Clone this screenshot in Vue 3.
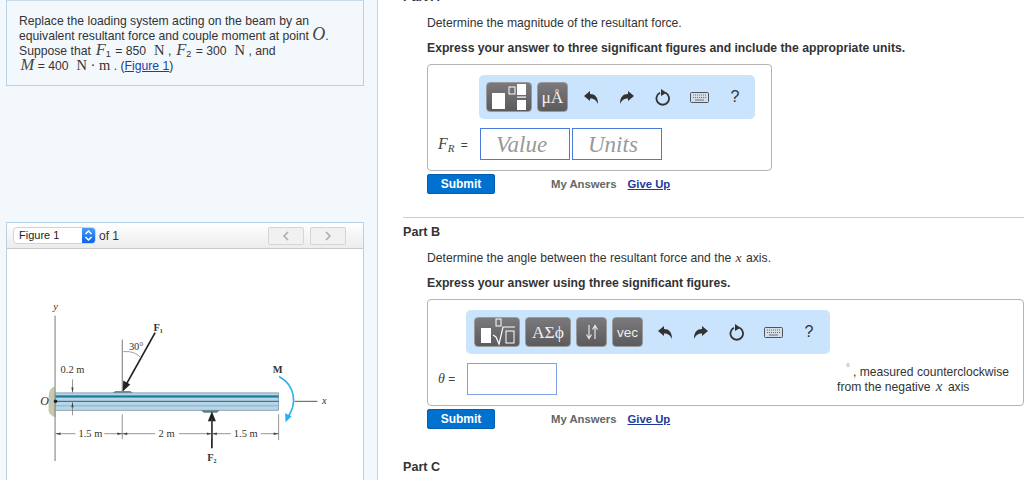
<script setup>
const toolsA = [
  { id: 'tpl', w: 46, kind: 'fraction' },
  { id: 'mu', w: 31, label: 'μÅ', serif: true }
]
const toolsB = [
  { id: 'root', w: 46, kind: 'root' },
  { id: 'greek', w: 46, label: 'ΑΣϕ', serif: true },
  { id: 'sort', w: 31, kind: 'sort' },
  { id: 'vec', w: 31, label: 'vec', serif: false }
]
const dims = [
  { x: 90, t: '1.5 m' },
  { x: 166.5, t: '2 m' },
  { x: 246, t: '1.5 m' }
]
</script>

<template>
  <div class="page">
    <aside class="side">
      <section class="intro">
        <p>
          Replace the loading system acting on the beam by an equivalent resultant force and couple moment at point
          <i class="m big bo">O</i>.
          Suppose that <i class="m big">F</i><sub class="s">1</sub> = 850 <span class="u">&nbsp;N</span> ,
          <i class="m big">F</i><sub class="s">2</sub> = 300 <span class="u">&nbsp;N</span> , and<br />
          <i class="m big">M</i> = 400 <span class="u">&nbsp;N · m</span> . (<a href="#">Figure 1</a>)
        </p>
      </section>

      <section class="figure">
        <header class="fig-head">
          <div class="select">
            <span class="sel-text">Figure 1</span>
            <span class="stepper">
              <svg width="9" height="13" viewBox="0 0 9 13">
                <path d="M1.5 5 4.5 2 7.5 5M1.5 8 4.5 11 7.5 8" fill="none" stroke="#fff" stroke-width="1.5" />
              </svg>
            </span>
          </div>
          <span class="of">of 1</span>
          <div class="nav">
            <button class="nav-btn">
              <svg width="8" height="10" viewBox="0 0 8 10"><path d="M6 1 2 5l4 4" fill="none" stroke="#aaa" stroke-width="1.5" /></svg>
            </button>
            <button class="nav-btn">
              <svg width="8" height="10" viewBox="0 0 8 10"><path d="M2 1l4 4-4 4" fill="none" stroke="#aaa" stroke-width="1.5" /></svg>
            </button>
          </div>
        </header>
        <svg class="beam" width="356" height="232" viewBox="7 249 356 232">
          <path d="M54 387c-5 2-6 6-6 12v12c0 3 3 6 7 7z" fill="#c9c7b0" />
          <line x1="54.5" y1="316" x2="54.5" y2="462" stroke="#777" />
          <rect x="55" y="393.5" width="224" height="17.5" fill="#b5d6e8" stroke="#7d98a6" stroke-width=".8" />
          <rect x="55" y="396" width="224" height="2.2" fill="#1b7a96" />
          <line x1="55" y1="402" x2="279" y2="402" stroke="#334" stroke-width=".8" />
          <line x1="55" y1="406.5" x2="279" y2="406.5" stroke="#84a6b8" stroke-width=".8" />
          <line x1="295" y1="402" x2="318" y2="402" stroke="#555" />
          <circle cx="55" cy="402" r="1.8" fill="#222" />
          <path d="M112 393.5l3-2h15l3 2z" fill="#6f8d98" />
          <path d="M201 411h19l-3 2.5h-13z" fill="#5f7d88" />
          <line x1="122" y1="340" x2="122" y2="392" stroke="#777" />
          <line x1="155" y1="333" x2="126" y2="385" stroke="#222" stroke-width="1.7" />
          <path d="M122.5 392l.5-11 7 4z" fill="#222" />
          <path d="M123 352q13-1 19 8" fill="none" stroke="#777" stroke-width=".7" />
          <line x1="212" y1="449" x2="212" y2="419" stroke="#222" stroke-width="1.7" />
          <path d="M212 412l-4 10h8z" fill="#222" />
          <path d="M279.500 377c16 9 19 27 8 42" fill="none" stroke="#2ab0ee" stroke-width="1.6" />
          <path d="M286 423l-.5-9 6.500 3z" fill="#2ab0ee" />
          <g stroke="#666" stroke-width=".7" fill="none">
            <line x1="72" y1="380" x2="72" y2="393" />
            <line x1="72" y1="403" x2="72" y2="416" />
            <line x1="122" y1="415" x2="122" y2="440" />
            <line x1="212" y1="420" x2="212" y2="440" />
            <line x1="279" y1="415" x2="279" y2="441" />
            <line x1="55" y1="434.500" x2="75" y2="434.500" />
            <line x1="104" y1="434.500" x2="155" y2="434.500" />
            <line x1="179" y1="434.500" x2="231" y2="434.500" />
            <line x1="261" y1="434.500" x2="279" y2="434.500" />
          </g>
          <g fill="#444">
            <path d="M55 434.500l5-1.200v2.400zM122 434.500l-5-1.200v2.400zM122 434.500l5-1.200v2.400zM212 434.500l-5-1.200v2.400zM212 434.500l5-1.200v2.400zM279 434.500l-5-1.200v2.400zM72 393l-1.200-5h2.400zM72 403l-1.200 5h2.400z" />
          </g>
          <g class="fig-text">
            <text x="55" y="310" text-anchor="middle" class="it">y</text>
            <text x="158" y="331" text-anchor="middle" class="bd">F<tspan dy="2" font-size="6">1</tspan></text>
            <text x="136" y="350" text-anchor="middle">30°</text>
            <text x="72" y="374" text-anchor="middle">0.2 m</text>
            <text x="278" y="374" text-anchor="middle" class="bd">M</text>
            <text x="44" y="406" text-anchor="middle" class="it big-o">O</text>
            <text x="325" y="405" text-anchor="middle" class="it">x</text>
            <text v-for="d in dims" :key="d.x" :x="d.x" y="438" text-anchor="middle">{{ d.t }}</text>
            <text x="212" y="462" text-anchor="middle" class="bd">F<tspan dy="2" font-size="6">2</tspan></text>
          </g>
        </svg>
      </section>
    </aside>

    <main class="main">
      <section class="part">
        <h3>Part A</h3>
        <div class="body">
          <p class="q">Determine the magnitude of the resultant force.</p>
          <p class="q strong">Express your answer to three significant figures and include the appropriate units.</p>
          <div class="answer a-short">
            <div class="toolbar tb-a">
              <div class="tool-group">
                <button v-for="t in toolsA" :key="t.id" class="tool" :class="{ serif: t.serif }" :style="{ width: t.w + 'px' }">
                  <svg v-if="t.kind === 'fraction'" width="38" height="26" viewBox="0 0 38 26">
                    <rect x="2" y="9" width="13" height="16" fill="#fff" />
                    <rect x="19" y="3" width="6" height="7" fill="none" stroke="#fff" stroke-width="1" />
                    <rect x="27" y="0" width="9" height="11" fill="#fff" />
                    <rect x="27" y="12.500" width="9" height="1.200" fill="#fff" />
                    <rect x="27" y="16" width="9" height="10" fill="#fff" />
                  </svg>
                  <template v-else>{{ t.label }}</template>
                </button>
              </div>
              <div class="actions">
                <span class="cell"><svg width="14" height="13" viewBox="0 0 14 13"><path d="M0 5 6 0v3c5 0 8 3 8 10-2-4-4-5.500-8-5.500V10z" fill="#333" /></svg></span>
                <span class="cell"><svg width="14" height="13" viewBox="0 0 14 13"><path d="M14 5 8 0v3C3 3 0 6 0 13c2-4 4-5.500 8-5.500V10z" fill="#333" /></svg></span>
                <span class="cell"><svg width="16" height="17" viewBox="0 0 16 17"><path d="M10.500 3.800A6.300 6.300 0 1 1 5 3.800" fill="none" stroke="#333" stroke-width="1.800" /><path d="M6 0l5.500 3.800L6 7z" fill="#333" /></svg></span>
                <span class="cell"><svg width="19" height="11" viewBox="0 0 19 11"><rect x=".5" y=".5" width="18" height="10" rx="1" fill="#d5dde6" stroke="#4a5560" /><path d="M3 3h13M3 5.500h13" stroke="#68727c" stroke-dasharray="1 1" /><path d="M5 8h9" stroke="#68727c" /></svg></span>
                <span class="cell help">?</span>
              </div>
            </div>
            <div class="row">
              <span class="lbl lbl-a"><i class="m lg">F</i><sub class="s2">R</sub> =</span>
              <span class="input ph">Value</span>
              <span class="input ph">Units</span>
            </div>
          </div>
          <div class="controls">
            <button class="submit">Submit</button>
            <span class="mine">My Answers</span>
            <a class="give" href="#">Give Up</a>
          </div>
        </div>
      </section>

      <hr class="rule" />

      <section class="part">
        <h3>Part B</h3>
        <div class="body">
          <p class="q">Determine the angle between the resultant force and the <i class="m">x</i> axis.</p>
          <p class="q strong">Express your answer using three significant figures.</p>
          <div class="answer a-wide">
            <div class="toolbar tb-b">
              <div class="tool-group">
                <button v-for="t in toolsB" :key="t.id" class="tool" :class="{ serif: t.serif, vec: t.id === 'vec' }" :style="{ width: t.w + 'px' }">
                  <svg v-if="t.kind === 'root'" width="38" height="28" viewBox="0 0 38 28">
                    <rect x="3" y="10" width="10" height="15" fill="#fff" />
                    <rect x="18" y="1" width="5" height="7" fill="none" stroke="#fff" />
                    <path d="M15 17l3 2 3 7 4-17h12" fill="none" stroke="#fff" stroke-width="1.200" />
                    <rect x="28" y="13" width="8" height="12" fill="none" stroke="#fff" />
                  </svg>
                  <svg v-else-if="t.kind === 'sort'" width="14" height="16" viewBox="0 0 14 16">
                    <path d="M4 1v13M1.500 10.500 4 14.500l2.500-4M10 15V2M7.500 5.500 10 1.500l2.500 4" fill="none" stroke="#e4e4e4" stroke-width="1.200" />
                  </svg>
                  <template v-else>{{ t.label }}</template>
                </button>
              </div>
              <div class="actions">
                <span class="cell"><svg width="14" height="13" viewBox="0 0 14 13"><path d="M0 5 6 0v3c5 0 8 3 8 10-2-4-4-5.500-8-5.500V10z" fill="#333" /></svg></span>
                <span class="cell"><svg width="14" height="13" viewBox="0 0 14 13"><path d="M14 5 8 0v3C3 3 0 6 0 13c2-4 4-5.500 8-5.500V10z" fill="#333" /></svg></span>
                <span class="cell"><svg width="16" height="17" viewBox="0 0 16 17"><path d="M10.500 3.800A6.300 6.300 0 1 1 5 3.800" fill="none" stroke="#333" stroke-width="1.800" /><path d="M6 0l5.500 3.800L6 7z" fill="#333" /></svg></span>
                <span class="cell"><svg width="19" height="11" viewBox="0 0 19 11"><rect x=".5" y=".5" width="18" height="10" rx="1" fill="#d5dde6" stroke="#4a5560" /><path d="M3 3h13M3 5.500h13" stroke="#68727c" stroke-dasharray="1 1" /><path d="M5 8h9" stroke="#68727c" /></svg></span>
                <span class="cell help">?</span>
              </div>
            </div>
            <div class="row">
              <span class="lbl lbl-b"><i class="m lg">θ</i> =</span>
              <span class="input focus"></span>
              <span class="note"><span class="deg">°</span>, measured counterclockwise<br />from the negative <i class="m nx">x</i> axis</span>
            </div>
          </div>
          <div class="controls">
            <button class="submit">Submit</button>
            <span class="mine">My Answers</span>
            <a class="give" href="#">Give Up</a>
          </div>
        </div>
      </section>

      <section class="part part-c">
        <h3>Part C</h3>
      </section>
    </main>
  </div>
</template>

<style>
html, body { margin: 0; background: #fff; }
</style>

<style scoped>
.page {
  width: 1024px;
  height: 480px;
  overflow: hidden;
  display: flex;
  font-family: "Liberation Sans", Arial, sans-serif;
  font-size: 12px;
  color: #333;
}
.side {
  width: 378px;
  flex: none;
  box-sizing: border-box;
  height: 480px;
  background: #f3f8fd;
  border-right: 1px solid #c3d5e6;
  padding: 0 13px 0 6px;
  display: flex;
  flex-direction: column;
}
.intro {
  height: 86px;
  box-sizing: border-box;
  border: 1px solid #b7d2e6;
  border-top-color: #c8dcec;
  padding: 13px 12px 0;
  font-size: 12.200px;
  line-height: 15px;
}
.intro p { margin: 0; }
.intro a { color: #1a3fa8; }
.m { font-family: "Liberation Serif", "Times New Roman", serif; font-style: italic; }
.big { font-size: 16.500px; line-height: 10px; color: #444; margin-left: 1.500px; }
.bo { font-size: 18px; margin-left: 0; }
.s { font-size: 9px; line-height: 0; vertical-align: -2px; margin-right: 1px; }
.u { font-family: "Liberation Serif", serif; font-size: 14.500px; line-height: 10px; margin-left: 1px; }
.figure {
  margin-top: 136px;
  height: 258px;
  box-sizing: border-box;
  border: 1px solid #b7d2e6;
  border-bottom: 0;
  background: #fff;
  display: flex;
  flex-direction: column;
}
.fig-head {
  height: 26px;
  flex: none;
  box-sizing: border-box;
  border-bottom: 1px solid #c9c9c9;
  background: linear-gradient(#fff, #ececec);
  display: flex;
  align-items: center;
  padding: 0 17px 0 6px;
}
.select {
  width: 83px;
  height: 17px;
  box-sizing: border-box;
  border: 1px solid #d4d4d4;
  border-radius: 4px;
  background: #fff;
  display: flex;
  justify-content: space-between;
  overflow: hidden;
}
.sel-text { padding-left: 5px; font-size: 11px; line-height: 15px; color: #222; }
.stepper {
  width: 13px;
  background: linear-gradient(#4a9bfb, #0b64ea);
  display: flex;
  align-items: center;
  justify-content: center;
}
.of { margin-left: 3px; }
.nav { margin-left: auto; display: flex; gap: 6px; }
.nav-btn {
  width: 36px;
  height: 18px;
  padding: 0;
  border: 1px solid #d6d6d6;
  border-radius: 2px;
  background: #f1f1f1;
  display: flex;
  align-items: center;
  justify-content: center;
}
.beam { display: block; }
.fig-text text { font-family: "Liberation Serif", serif; font-size: 10.500px; fill: #333; }
.fig-text .it { font-style: italic; }
.fig-text .bd { font-weight: 700; }
.fig-text .big-o { font-size: 12px; }

.main {
  flex: 1;
  min-width: 0;
  margin-top: -12px;
  padding-left: 25px;
}
.part h3 { margin: 0; padding-top: 1px; font-size: 12.600px; line-height: 16px; font-weight: 700; }
.body { margin: 9px 0 0 24px; }
.q { margin: 0 0 8px; padding-top: 1px; font-size: 12.200px; line-height: 16px; }
.q .m { font-size: 13.500px; margin: 0 1px; }
.strong { font-weight: 700; font-size: 12.200px; }
.answer {
  box-sizing: border-box;
  height: 107px;
  border: 1px solid #b4b4b4;
  border-radius: 4px;
  padding-top: 10px;
}
.a-short { width: 345px; }
.a-wide { width: 597px; }
.toolbar {
  height: 44px;
  box-sizing: border-box;
  background: #c9e4fc;
  border-radius: 5px;
  display: flex;
  align-items: center;
}
.tb-a { margin-left: 51px; width: 276px; padding-left: 7px; }
.tb-b { margin-left: 38px; width: 364px; padding-left: 8px; }
.tool-group { display: flex; gap: 5px; }
.tool {
  height: 30px;
  padding: 0;
  border: 1px solid #9a9a9a;
  border-radius: 4px;
  background: linear-gradient(#7b797c, #5b5a5d);
  color: #eee;
  font-family: "Liberation Sans", sans-serif;
  font-size: 13.500px;
  display: flex;
  align-items: center;
  justify-content: center;
}
.tool.serif { font-family: "Liberation Serif", serif; font-size: 17.500px; }
.actions { display: flex; align-items: center; }
.tb-a .actions { margin-left: 5px; }
.tb-b .actions { margin-left: 4px; }
.cell { width: 36px; display: flex; align-items: center; justify-content: center; }
.help { font-size: 16px; color: #333; }
.row { display: flex; align-items: center; margin-top: 9px; height: 32px; }
.lbl { font-size: 12px; color: #444; }
.lbl-a { margin-left: 10px; width: 42px; }
.lbl-b { margin-left: 10px; width: 29px; }
.lg { font-size: 16px; }
.lbl-b .lg { font-size: 14px; }
.s2 { font-family: "Liberation Serif", serif; font-style: italic; font-size: 11px; line-height: 0; vertical-align: -3px; margin-right: 3px; }
.input {
  width: 90px;
  height: 32px;
  box-sizing: border-box;
  border: 1px solid #4a7bdc;
  margin-right: 2px;
  background: #fff;
}
.ph {
  font-family: "Liberation Serif", serif;
  font-style: italic;
  font-size: 23px;
  line-height: 31px;
  color: #999;
  padding-left: 15px;
}
.focus { border-color: #7fa3e6; }
.note { margin: 0 14px 3px auto; font-size: 12.100px; line-height: 15px; white-space: nowrap; }
.deg { color: #999; font-size: 10px; vertical-align: 5px; margin: 0 3px 0 9px; }
.nx { font-size: 15px; margin: 0 2px; line-height: 10px; }
.controls { display: flex; align-items: center; margin-top: 3px; height: 20px; }
.submit {
  width: 68px;
  height: 20px;
  padding: 0;
  border: 1px solid #0160b0;
  border-radius: 2px;
  background: #0071ce;
  color: #fff;
  font-family: "Liberation Sans", sans-serif;
  font-weight: 700;
  font-size: 12px;
}
.mine { margin-left: 56px; font-weight: 700; color: #666; font-size: 11.300px; }
.give { margin-left: 11px; font-weight: 700; color: #1b3b9c; font-size: 11.300px; }
.rule { margin: 23px 0 5px; border: 0; border-top: 1px solid #ccc; }
.part-c { margin-top: 29px; }
</style>
